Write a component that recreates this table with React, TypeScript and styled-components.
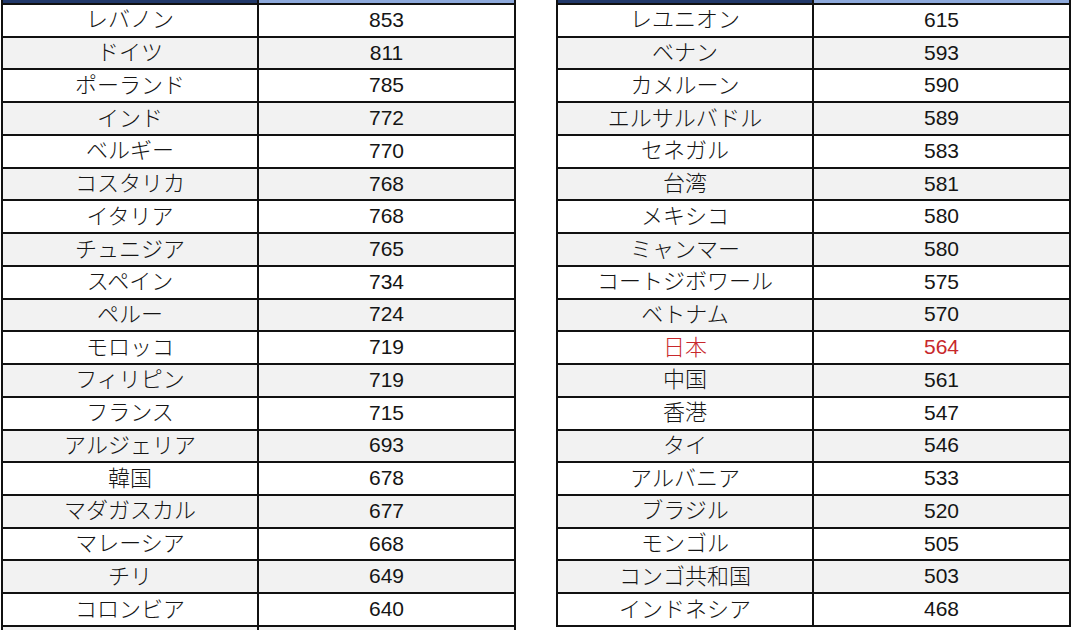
import React from 'react';
import styled, { createGlobalStyle } from 'styled-components';

const GlobalStyle = createGlobalStyle`
  html, body {
    margin: 0;
    padding: 0;
    background: #fff;
    overflow: hidden;
  }
  body {
    font-family: "Liberation Sans", "Noto Sans CJK JP", sans-serif;
    color: #111;
  }
`;

const Page = styled.div`
  display: flex;
  align-items: flex-start;
  gap: 40px;
  padding-left: 1px;
  height: 630px;
  overflow: hidden;
`;

const Sheet = styled.div<{ $closed?: boolean }>`
  width: 515px;
  box-sizing: border-box;
  border-left: 2px solid #111;
  border-right: 2px solid #111;
  border-bottom: ${(p) => (p.$closed ? '2px solid #111' : 'none')};
`;

const HeaderRow = styled.div`
  display: grid;
  grid-template-columns: 256px 1fr;
  height: 3px;
`;

const HeaderCell = styled.div<{ $light?: boolean }>`
  background: ${(p) => (p.$light ? '#8eaadc' : '#22396a')};
  border-right: ${(p) => (p.$light ? 'none' : '2px solid #111')};
`;

const Row = styled.div<{ $shade: boolean }>`
  display: grid;
  grid-template-columns: 256px 1fr;
  height: 32.74px;
  box-sizing: border-box;
  border-top: 2px solid #111;
  background: ${(p) => (p.$shade ? '#f2f2f2' : '#fff')};
`;

const Cell = styled.div<{ $red?: boolean }>`
  display: flex;
  align-items: center;
  justify-content: center;
  font-size: 21px;
  line-height: 1;
  padding-bottom: 2px;
  color: ${(p) => (p.$red ? '#c8282c' : '#151515')};
`;

const NameCell = styled(Cell)`
  font-size: 22px;
  font-weight: 300;
  padding-bottom: 0;
  border-right: 2px solid #111;
`;

type Entry = [string, number | '', boolean?];

const left: Entry[] = [
  ['レバノン', 853],
  ['ドイツ', 811],
  ['ポーランド', 785],
  ['インド', 772],
  ['ベルギー', 770],
  ['コスタリカ', 768],
  ['イタリア', 768],
  ['チュニジア', 765],
  ['スペイン', 734],
  ['ペルー', 724],
  ['モロッコ', 719],
  ['フィリピン', 719],
  ['フランス', 715],
  ['アルジェリア', 693],
  ['韓国', 678],
  ['マダガスカル', 677],
  ['マレーシア', 668],
  ['チリ', 649],
  ['コロンビア', 640],
  ['', ''],
];

const right: Entry[] = [
  ['レユニオン', 615],
  ['ベナン', 593],
  ['カメルーン', 590],
  ['エルサルバドル', 589],
  ['セネガル', 583],
  ['台湾', 581],
  ['メキシコ', 580],
  ['ミャンマー', 580],
  ['コートジボワール', 575],
  ['ベトナム', 570],
  ['日本', 564, true],
  ['中国', 561],
  ['香港', 547],
  ['タイ', 546],
  ['アルバニア', 533],
  ['ブラジル', 520],
  ['モンゴル', 505],
  ['コンゴ共和国', 503],
  ['インドネシア', 468],
];

const Table: React.FC<{ rows: Entry[]; closed?: boolean }> = ({ rows, closed }) => (
  <Sheet $closed={closed}>
    <HeaderRow>
      <HeaderCell />
      <HeaderCell $light />
    </HeaderRow>
    {rows.map(([name, score, red], i) => (
      <Row key={i} $shade={i % 2 === 1}>
        <NameCell $red={red}>{name}</NameCell>
        <Cell $red={red}>{score}</Cell>
      </Row>
    ))}
  </Sheet>
);

const App: React.FC = () => (
  <>
    <GlobalStyle />
    <Page>
      <Table rows={left} />
      <Table rows={right} closed />
    </Page>
  </>
);

export default App;
